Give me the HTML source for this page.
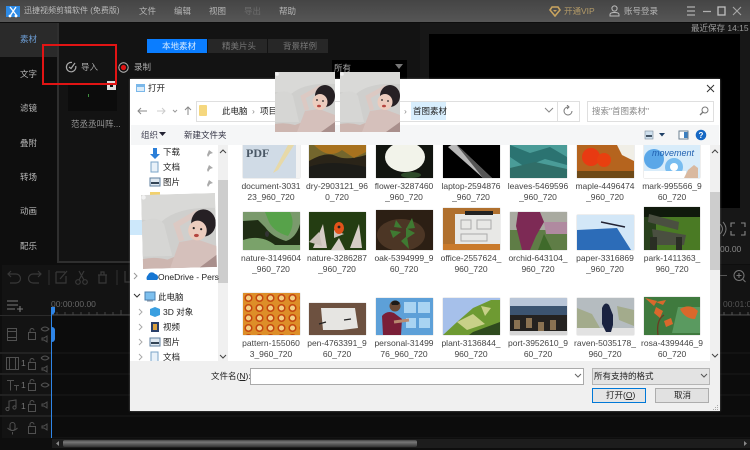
<!DOCTYPE html>
<html lang="zh"><head><meta charset="utf-8"><title>迅捷视频剪辑软件</title>
<style>
html,body{margin:0;padding:0;background:#0d0d0d}
#p{position:relative;width:750px;height:450px;overflow:hidden;background:#0e0e0e;font-family:"Liberation Sans","Noto Sans CJK SC",sans-serif;font-size:8.5px;filter:blur(.35px)}
#p div,#p svg,#p span.t{position:absolute}
.t{line-height:12px;white-space:nowrap;display:block}
.m{color:#b5b5b5}
.s{color:#b8b8b8;left:20px}
.d{color:#333}
.c{color:#444;width:66px;text-align:center;line-height:10.5px;white-space:normal;word-break:break-all}
.th{box-shadow:0 0 1px #aaa}
.n{color:#222}
</style></head><body><div id="p">

<svg width="0" height="0" style="left:0;top:0"><symbol id="baby" viewBox="0 0 60 60"><rect width="60" height="60" fill="#cfcfcd"/><path d="M0 0h60v12q-30-2-44 10L0 20z" fill="#d9d9d7"/><path d="M0 22q12-6 18 2l6 26H0z" fill="#d6d6d4"/><path d="M0 52q10-2 20 1l8-3 10 10H0z" fill="#cdb6b0"/><path d="M22 60l8-21 14-2 16 6v17z" fill="#d5c0bb"/><path d="M46 60l14-10v10z" fill="#a98f8c"/><path d="M32 38L28 25l18-10" fill="none" stroke="#dcc9c3" stroke-width="4.500"/><ellipse cx="50" cy="24" rx="10" ry="11" fill="#262024"/><ellipse cx="45" cy="30" rx="7.500" ry="8" fill="#ecccbe"/><circle cx="42" cy="28" r=".9" fill="#222"/><circle cx="48" cy="29" r=".9" fill="#222"/><ellipse cx="44" cy="34" rx="2" ry="1.300" fill="#b5453f"/><circle cx="2" cy="2" r="1.800" fill="#f2f2f2"/></symbol></svg>

<!-- title bar -->
<div style="left:0;top:0;width:750px;height:22px;background:linear-gradient(#454545,#565656)"></div>
<svg style="left:5px;top:5px" width="16" height="13" viewBox="0 0 16 13"><rect x="1" y="1" width="14" height="11" fill="#2e8be6"/><path d="M5 2l7 9M11 2L5 11" stroke="#fff" stroke-width="1.300"/><circle cx="5" cy="11" r="1.400" fill="#fff"/><circle cx="11" cy="11" r="1.400" fill="#fff"/></svg>
<span class="t m" style="left:24px;top:5px;color:#bbb;font-size:8px">迅捷视频剪辑软件 (免费版)</span>
<span class="t m" style="left:139px;top:5px">文件</span>
<span class="t m" style="left:174px;top:5px">编辑</span>
<span class="t m" style="left:209px;top:5px">视图</span>
<span class="t" style="left:244px;top:5px;color:#6c6c6c">导出</span>
<span class="t m" style="left:279px;top:5px">帮助</span>
<svg style="left:549px;top:6px" width="12" height="11" viewBox="0 0 12 11"><path d="M3 1h6l2 3-5 6-5-6z" fill="none" stroke="#c9a45f" stroke-width="1.600"/><path d="M4 4h4L6 6z" fill="#c9a45f"/></svg>
<span class="t" style="left:564px;top:5px;color:#b39a68">开通VIP</span>
<svg style="left:609px;top:5px" width="11" height="12" viewBox="0 0 11 12"><circle cx="5.500" cy="3.500" r="2.600" fill="none" stroke="#bbb"/><path d="M1 11V9.500q0-2 4.500-2t4.500 2V11z" fill="none" stroke="#bbb"/></svg>
<span class="t m" style="left:624px;top:5px">账号登录</span>
<svg style="left:686px;top:5px" width="60" height="12" viewBox="0 0 60 12"><path d="M1 2h8M1 6h8M1 10h8M17 6.500h8" stroke="#b0b0b0" stroke-width="1.200"/><rect x="32" y="2" width="7" height="8" fill="none" stroke="#c0c0c0" stroke-width="1.300"/><path d="M47 2l8 8M55 2l-8 8" stroke="#a8a8a8" stroke-width="1.100"/></svg>

<!-- sidebar -->
<div style="left:0;top:23px;width:57px;height:34px;background:#2a2a2a"></div>
<span class="t" style="left:20px;top:33px;color:#6d9ed6">素材</span>
<span class="t s" style="top:68px">文字</span>
<span class="t s" style="top:102px">滤镜</span>
<span class="t s" style="top:137px">叠附</span>
<span class="t s" style="top:171px">转场</span>
<span class="t s" style="top:205px">动画</span>
<span class="t s" style="top:240px">配乐</span>

<!-- material panel -->
<div style="left:57px;top:23px;width:361px;height:238px;background:#131313;border:solid #2f2f2f;border-width:0 1px 2px 2px"></div>
<div style="left:147px;top:39px;width:60px;height:14px;background:#0a7dff"></div>
<div style="left:208px;top:39px;width:59px;height:14px;background:#272727"></div>
<div style="left:268px;top:39px;width:60px;height:14px;background:#272727"></div>
<span class="t" style="left:162px;top:40px;color:#d8ecff">本地素材</span>
<span class="t" style="left:222px;top:40px;color:#777">精美片头</span>
<span class="t" style="left:283px;top:40px;color:#777">背景样例</span>
<svg style="left:64px;top:60px" width="14" height="14" viewBox="0 0 14 14"><path d="M8 2.500A4.700 4.700 0 1 0 11.700 6" fill="none" stroke="#aaa" stroke-width="1.200"/><path d="M5 7l2 1.500L11 3" fill="none" stroke="#aaa" stroke-width="1.200"/></svg>
<span class="t" style="left:81px;top:61px;color:#aaa">导入</span>
<svg style="left:118px;top:62px" width="11" height="11" viewBox="0 0 11 11"><circle cx="5.500" cy="5.500" r="4.700" fill="none" stroke="#bbb"/><circle cx="5.500" cy="5.500" r="2.600" fill="#e01414"/></svg>
<span class="t" style="left:134px;top:61px;color:#aaa">录制</span>
<div style="left:332px;top:60px;width:75px;height:20px;background:#000"></div>
<span class="t" style="left:334px;top:62px;color:#aaa">所有</span>
<svg style="left:395px;top:64px" width="8" height="6" viewBox="0 0 8 6"><path d="M0 0h8L4 5z" fill="#777"/></svg>
<div style="left:68px;top:83px;width:49px;height:28px;background:#0c0c0c"></div>
<div style="left:88px;top:94px;width:1px;height:3px;background:#3e8f3e"></div>
<div style="left:107px;top:81px;width:9px;height:9px;background:#ddd"></div>
<div style="left:110px;top:84px;width:3px;height:3px;background:#111"></div>
<span class="t" style="left:71px;top:118px;color:#999">范丞丞叫阵...</span>
<div style="left:42px;top:44px;width:71px;height:37px;border:2px solid #e11414"></div>

<!-- preview -->
<div style="left:420px;top:23px;width:330px;height:241px;background:#171717"></div>
<div style="left:429px;top:34px;width:311px;height:174px;background:#000"></div>
<span class="t" style="left:691px;top:22px;color:#999">最近保存 14:15</span>
<svg style="left:718px;top:221px" width="30" height="16" viewBox="0 0 30 16"><path d="M2 3q5 5 0 10M5 1q6 7 0 14" fill="none" stroke="#777"/><path d="M13 6V2h4M23 2h4v4M27 10v4h-4M17 14h-4v-4" fill="none" stroke="#888" stroke-width="1.100"/></svg>
<span class="t" style="left:720px;top:243px;color:#888">00.00</span>

<!-- timeline -->
<div style="left:2px;top:265px;width:748px;height:173px;background:#131313"></div>
<svg style="left:0;top:265px" width="130" height="24" viewBox="0 0 130 24" fill="none" stroke="#383838" stroke-width="1.200"><path d="M11 6L8 9l3 3M8 9h8a4 4 0 0 1 0 9h-6M38 6l3 3-3 3M41 9h-8a4 4 0 0 0 0 9h6"/><path d="M49 5v15" stroke="#2c2c2c"/><path d="M56 7h9M56 7v11h10v-7M60 14l7-8"/><circle cx="78" cy="17" r="2.300"/><circle cx="85" cy="17" r="2.300"/><path d="M79 15l5-9M84 15l-5-9"/><path d="M98 10h9M99 10v8h7v-8M101 10V7h3v3"/><path d="M117 5v15" stroke="#2c2c2c"/><path d="M125 6v11h5"/></svg>
<svg style="left:718px;top:268px" width="32" height="18" viewBox="0 0 32 18" fill="none" stroke="#777"><path d="M2 7.500h7" stroke="#555"/><circle cx="21" cy="7.500" r="5"/><path d="M18.500 7.500h5M21 5v5M25 11.500l2.500 2.500"/></svg>
<svg style="left:7px;top:300px" width="16" height="12" viewBox="0 0 16 12"><path d="M0 1h11M0 5h11M0 9h8M10 9h6M13 6v6" stroke="#777" stroke-width="1.100"/></svg>
<span class="t" style="left:51px;top:298px;color:#666">00:00:00.00</span>
<span class="t" style="left:723px;top:298px;color:#555">00:01:04</span>
<svg style="left:52px;top:310px" width="698" height="5" viewBox="0 0 698 5"><path d="M0 4.500h698" stroke="#333"/><path d="M5 2v3M13 2v3M21 2v3M29 2v3M37 2v3M45 2v3M53 2v3M61 2v3M69 0v5" stroke="#444"/><path d="M672 2v3M680 2v3M688 2v3M696 2v3" stroke="#555"/></svg>
<div style="left:0;top:315px;width:750px;height:1px;background:#2b2b2b"></div>
<div style="left:52px;top:316px;width:698px;height:36px;background:#0c0c0c"></div>
<div style="left:52px;top:354px;width:698px;height:19px;background:#0c0c0c"></div>
<div style="left:52px;top:375px;width:698px;height:19px;background:#0c0c0c"></div>
<div style="left:52px;top:396px;width:698px;height:19px;background:#0c0c0c"></div>
<div style="left:52px;top:417px;width:698px;height:20px;background:#0c0c0c"></div>
<div style="left:0;top:352px;width:52px;height:2px;background:#222"></div>
<div style="left:0;top:373px;width:52px;height:2px;background:#222"></div>
<div style="left:0;top:394px;width:52px;height:2px;background:#222"></div>
<div style="left:0;top:415px;width:52px;height:2px;background:#222"></div>
<svg style="left:0;top:316px" width="52" height="122" viewBox="0 0 52 122" fill="none" stroke="#505050">
<rect x="7.500" y="12.500" width="9" height="12"/><path d="M7.500 15.500h9M7.500 21.500h9"/>
<rect x="6.500" y="41.500" width="12" height="12"/><path d="M9.500 41.500v12M15.500 41.500v12"/>
<path d="M7 64.500h7M10.500 64.500v10M14 69.500h5M16.500 69.500v5"/>
<path d="M9 93V85l7-1v7"/><circle cx="7.500" cy="93" r="1.600"/><circle cx="14.500" cy="91.500" r="1.600"/>
<rect x="10" y="106.500" width="5" height="8" rx="2.500"/><path d="M7.500 112q5 5 10 0M12.500 116v2.500"/>
<path d="M28.500 16.500h7v7h-7zM30 16.500v-2a2 2 0 0 1 4 0M28.500 46.500h7v7h-7zM30 46.500v-2a2 2 0 0 1 4 0M28.500 67.500h7v7h-7zM30 67.500v-2a2 2 0 0 1 4 0M28.500 88.500h7v7h-7zM30 88.500v-2a2 2 0 0 1 4 0M28.500 110.500h7v7h-7zM30 110.500v-2a2 2 0 0 1 4 0"/>
<path d="M41 13q4-4 8 0q-4 4-8 0M41 42q4-4 8 0q-4 4-8 0M41 69q4-4 8 0q-4 4-8 0"/>
<path d="M42 22h2l3-2v6l-3-2h-2zM42 52h2l3-2v6l-3-2h-2zM42 88h2l3-2v6l-3-2h-2zM42 110h2l3-2v6l-3-2h-2z"/></svg>
<span class="t" style="left:21px;top:357px;color:#777">1</span>
<span class="t" style="left:21px;top:379px;color:#777">1</span>
<span class="t" style="left:21px;top:400px;color:#777">1</span>
<div style="left:51px;top:309px;width:1px;height:129px;background:#2f86e8"></div>
<svg style="left:51px;top:307px" width="5" height="8" viewBox="0 0 5 8"><path d="M0 0h4v5L2 8 0 6z" fill="#2f86e8"/></svg>
<div style="left:52px;top:327px;width:3px;height:15px;background:#2f86e8;border-radius:0 3px 3px 0"></div>
<div style="left:52px;top:439px;width:698px;height:9px;background:#1d1d1d"></div>
<div style="left:63px;top:440px;width:354px;height:7px;background:linear-gradient(#444,#777 30%,#333);border-radius:2px"></div>
<svg style="left:54px;top:440px" width="696" height="7" viewBox="0 0 696 7"><path d="M5 1L2 3.500 5 6zM690 1l3 2.500L690 6z" fill="#888"/></svg>

<!-- dialog -->
<div style="left:130px;top:79px;width:590px;height:332px;background:#fff;box-shadow:0 0 2px #666"></div>
<svg style="left:136px;top:84px" width="10" height="8" viewBox="0 0 10 8"><rect width="9" height="8" fill="#7bb8ea"/><rect x="1" y="3" width="7" height="4" fill="#dcecf8"/></svg>
<span class="t n" style="left:148px;top:82px">打开</span>
<svg style="left:706px;top:84px" width="9" height="9" viewBox="0 0 9 9"><path d="M1 1l7 7M8 1L1 8" stroke="#333"/></svg>
<svg style="left:135px;top:105px" width="60" height="12" viewBox="0 0 60 12" fill="none"><path d="M12 6H3M6 3L3 6l3 3" stroke="#888"/><path d="M22 6h8M27 3l3 3-3 3" stroke="#ccc"/><path d="M38 5l2 2 2-2" stroke="#999"/><path d="M53 10V2M50 5l3-3 3 3" stroke="#888"/></svg>
<div style="left:196px;top:101px;width:382px;height:19px;border:1px solid #dfdfdf"></div>
<div style="left:557px;top:101px;width:1px;height:20px;background:#dfdfdf"></div>
<div style="left:587px;top:101px;width:125px;height:19px;border:1px solid #dfdfdf"></div>
<div style="left:199px;top:105px;width:8px;height:11px;background:#f5d77e;border-radius:1px"></div>
<span class="t" style="left:252px;top:105px;color:#888">›</span>
<span class="t n" style="left:222px;top:105px">此电脑</span>
<span class="t n" style="left:260px;top:105px">项目</span>
<div style="left:411px;top:102px;width:35px;height:18px;background:#d8eefd"></div>
<span class="t n" style="left:413px;top:105px">首图素材</span>
<span class="t" style="left:404px;top:105px;color:#888">›</span>
<svg style="left:544px;top:107px" width="10" height="7" viewBox="0 0 10 7"><path d="M1 1l4 4 4-4" stroke="#888" fill="none"/></svg>
<svg style="left:563px;top:105px" width="10" height="11" viewBox="0 0 10 11"><path d="M5 2a4 4 0 1 0 4 4M4 0l2 2-2 2" fill="none" stroke="#777"/></svg>
<span class="t" style="left:592px;top:105px;color:#888">搜索"首图素材"</span>
<svg style="left:699px;top:106px" width="10" height="10" viewBox="0 0 10 10"><circle cx="6" cy="4" r="3" fill="none" stroke="#777"/><path d="M4 6L1 9" stroke="#777" stroke-width="1.300"/></svg>
<div style="left:131px;top:125px;width:588px;height:20px;background:#f5f6f7"></div>
<span class="t" style="left:141px;top:129px;color:#445">组织</span>
<svg style="left:159px;top:132px" width="7" height="4" viewBox="0 0 7 4"><path d="M0 0h7L3.500 4z" fill="#223"/></svg>
<span class="t" style="left:184px;top:129px;color:#334">新建文件夹</span>
<svg style="left:644px;top:128px" width="70" height="14" viewBox="0 0 70 14"><rect x="1" y="3" width="8" height="8" fill="#cfe0ee" stroke="#7a8a9a" stroke-width=".6"/><rect x="2" y="7" width="6" height="2" fill="#456"/><path d="M15 5h6l-3 3.500z" fill="#1f3f66"/><rect x="35" y="3" width="9" height="8" fill="#fff" stroke="#6c8092"/><rect x="40" y="4" width="3.500" height="6" fill="#3c7fc0"/><circle cx="57" cy="7" r="5.300" fill="#1668c4"/><text x="57" y="10" font-size="8" font-weight="bold" font-family="Liberation Sans" fill="#fff" text-anchor="middle">?</text></svg>

<!-- nav pane -->
<svg style="left:130px;top:145px" width="100" height="217" viewBox="0 0 100 217">
<path d="M23 3v6h-3l5 5 5-5h-3V3z" fill="#2c7fd8"/>
<rect x="21" y="17" width="7" height="10" fill="#e8f1f9" stroke="#7aa4c8"/>
<rect x="20" y="33" width="10" height="8" fill="#dfe8f0" stroke="#5f7f9f"/><rect x="21" y="37" width="8" height="2" fill="#345"/>
<rect x="20" y="47" width="10" height="5" fill="#f2d16e"/>
<path d="M79 5l4 3-3 1-2 3-1-2zM79 20l4 3-3 1-2 3-1-2zM79 35l4 3-3 1-2 3-1-2z" fill="#aaa"/>
<rect x="0" y="75" width="12" height="15" fill="#cde8fb"/>
<path d="M4 128l3 3-3 3" fill="none" stroke="#999"/>
<path d="M17 135a4 4 0 0 1 1-5 4 4 0 0 1 7-1 3.500 3.500 0 0 1 2 6z" fill="#1676d2"/>
<path d="M4 149l3 3 3-3" fill="none" stroke="#333"/>
<rect x="15" y="147" width="10" height="8" fill="#7ec0ee" stroke="#4a80b0"/><rect x="17" y="155" width="6" height="1.500" fill="#7a90a8"/>
<path d="M9 164l3 3-3 3M9 179l3 3-3 3M9 194l3 3-3 3M9 209l3 3-3 3" fill="none" stroke="#aaa"/>
<path d="M20 164l5-2 5 2v6l-5 2-5-2z" fill="#3a9fe0"/>
<rect x="21" y="177" width="8" height="10" fill="#2a3f6a"/><rect x="23" y="179" width="4" height="6" fill="#d8a040"/>
<rect x="20" y="193" width="10" height="8" fill="#dfe8f0" stroke="#5f7f9f"/><rect x="21" y="197" width="8" height="2" fill="#345"/>
<rect x="21" y="207" width="7" height="10" fill="#e8f1f9" stroke="#7aa4c8"/>
<rect x="88" y="0" width="10" height="216" fill="#f0f0f0"/><rect x="88" y="35" width="10" height="103" fill="#cdcdcd"/>
<path d="M90 8l3-3 3 3M90 210l3 3 3-3" fill="none" stroke="#444"/>
</svg>
<span class="t n" style="left:163px;top:146px">下载</span>
<span class="t n" style="left:163px;top:161px">文档</span>
<span class="t n" style="left:163px;top:176px">图片</span>
<span class="t n" style="left:158px;top:271px">OneDrive - Pers</span>
<span class="t n" style="left:158px;top:291px">此电脑</span>
<span class="t n" style="left:163px;top:306px">3D 对象</span>
<span class="t n" style="left:163px;top:321px">视频</span>
<span class="t n" style="left:163px;top:336px">图片</span>
<span class="t n" style="left:163px;top:351px">文档</span>

<!-- file grid -->
<div style="left:0;top:0;width:750px;height:450px;clip-path:inset(145px 40px 89px 230px)">
<svg class="th" style="left:243px;top:135px" width="57" height="43" viewBox="0 0 57 43"><rect width="57" height="43" fill="#d0dbe6"/><rect x="53" width="4" height="43" fill="#f2f2f2"/><text x="3" y="22" font-family="Liberation Serif" font-weight="bold" font-size="12" fill="#4a5866">PDF</text><path d="M46 8L30 38l5-3L51 10z" fill="#e7d9a8"/></svg>
<svg class="th" style="left:309px;top:135px" width="57" height="43" viewBox="0 0 57 43"><rect width="57" height="43" fill="#2a2418"/><path d="M0 10h57v10q-20 6-30 1T0 26z" fill="#73662d"/><path d="M5 10q15 15 28 5l12 8 12-6V8H5z" fill="#a8721e"/><path d="M0 32q20-8 57 0v11H0z" fill="#1c1c18"/></svg>
<svg class="th" style="left:376px;top:135px" width="57" height="43" viewBox="0 0 57 43"><rect width="57" height="43" fill="#121510"/><ellipse cx="29" cy="22" rx="20" ry="15" fill="#f2f3ea"/><ellipse cx="35" cy="40" rx="10" ry="3" fill="#2e4a2a"/></svg>
<svg class="th" style="left:443px;top:135px" width="57" height="43" viewBox="0 0 57 43"><rect width="57" height="43" fill="#000"/><path d="M5 12L40 43h9L12 8z" fill="#b8b8b8"/><path d="M12 8L49 43H40L20 18z" fill="#555"/></svg>
<svg class="th" style="left:510px;top:135px" width="57" height="43" viewBox="0 0 57 43"><rect width="57" height="43" fill="#4a9c98"/><path d="M0 10l20 8 20-6 17 10v8L35 24 15 32 0 22z" fill="#2b7371"/><path d="M0 33l25-6 32 7v9H0z" fill="#306e68"/></svg>
<svg class="th" style="left:577px;top:135px" width="57" height="43" viewBox="0 0 57 43"><rect width="57" height="43" fill="#b5641e"/><circle cx="14" cy="22" r="9" fill="#e83a12"/><circle cx="27" cy="25" r="7" fill="#e8400f"/><path d="M40 10h17v16L45 20z" fill="#f0eee6"/><path d="M0 36h57v7H0z" fill="#6e4a18"/></svg>
<svg class="th" style="left:644px;top:135px" width="56" height="43" viewBox="0 0 56 43"><rect width="56" height="43" fill="#d8ecfa"/><circle cx="10" cy="24" r="10" fill="#5aa7e8"/><circle cx="30" cy="32" r="9" fill="#79bdf0"/><circle cx="30" cy="32" r="4" fill="#fff"/><path d="M0 36h42v7H0z" fill="#fff"/><path d="M44 35l6-5 4 3v10H40z" fill="#d9b9a0"/><text x="8" y="21" font-family="Liberation Sans" font-style="italic" font-size="9" fill="#2060b0">movement</text></svg>

<svg class="th" style="left:243px;top:212px" width="57" height="38" viewBox="0 0 57 38"><rect width="57" height="38" fill="#1f2d14"/><path d="M0 0h57v12q-4 14-14 17-14-4-21-14L15 8 0 9z" fill="#7a9a6c"/><path d="M22 0h25q6 12-2 24-14-4-19-14z" fill="#57a24a"/><path d="M0 28q18-6 32 5l25 0v5H0z" fill="#7aa26a"/><ellipse cx="24" cy="22" rx="2" ry="3" fill="#333"/></svg>
<svg class="th" style="left:309px;top:212px" width="57" height="38" viewBox="0 0 57 38"><rect width="57" height="38" fill="#243d12"/><path d="M4 36l10-24 4 24zM22 38l8-12 6 12zM41 36l9-24 3 24z" fill="#d6cdc6"/><path d="M0 30l10-10 3 14zM25 18l10 4-10 4z" fill="#c9c0b8"/><ellipse cx="30" cy="16" rx="5" ry="6" fill="#e2531a"/><circle cx="30" cy="15" r="1.400" fill="#222"/></svg>
<svg class="th" style="left:376px;top:210px" width="57" height="40" viewBox="0 0 57 40"><rect width="57" height="40" fill="#2c1f14"/><ellipse cx="25" cy="25" rx="24" ry="16" fill="#4c3625"/><path d="M20 10l6 8-8-1zM36 8l3 10-9 1zM30 18l9 5-9 6zM31 26l2 13-8-8zM14 20l11 2-8 6z" fill="#3f7a32"/></svg>
<svg class="th" style="left:443px;top:208px" width="57" height="42" viewBox="0 0 57 42"><rect width="57" height="42" fill="#b0702e"/><rect x="12" y="6" width="45" height="30" fill="#e8e8e6"/><path d="M22 3h28v4H22z" fill="#222"/><path d="M18 12h10v9H18zM34 12h14v9H34zM18 26h26v7H18z" fill="none" stroke="#aaa"/><path d="M0 36h57v6H0z" fill="#c97a2c"/></svg>
<svg class="th" style="left:510px;top:212px" width="57" height="38" viewBox="0 0 57 38"><rect width="57" height="38" fill="#a9aaa0"/><path d="M0 18h57v20H0z" fill="#5f7d46"/><path d="M8 0h22l4 10-8 14-6 14H12L6 14z" fill="#7d2a55"/><path d="M34 10h23v12H36z" fill="#b08aa0"/><path d="M34 22l8 16H28z" fill="#3f6a2a"/></svg>
<svg class="th" style="left:577px;top:215px" width="57" height="35" viewBox="0 0 57 35"><rect width="57" height="35" fill="#d3e7f7"/><path d="M0 15l40-2 14 22H0z" fill="#2c6cb8"/><path d="M24 7l24 5" stroke="#223" stroke-width="1.500"/></svg>
<svg class="th" style="left:644px;top:207px" width="56" height="43" viewBox="0 0 56 43"><rect width="56" height="43" fill="#4a7a24"/><path d="M0 0h56v10H0z" fill="#101a0c"/><path d="M0 10h12v33H0z" fill="#28401c"/><path d="M5 7l30 8-1 8L4 15zM8 22l34 6-2 10H10z" fill="#4a4f40"/><path d="M6 30h7v13H6zM32 30h6v13h-6z" fill="#2a2e24"/></svg>

<svg class="th" style="left:243px;top:293px" width="57" height="42" viewBox="0 0 57 42"><defs><pattern id="pa" width="11" height="10" patternUnits="userSpaceOnUse"><rect width="11" height="10" fill="#dd8e28"/><circle cx="5.500" cy="5" r="3.300" fill="#f3cf85" stroke="#c4460f" stroke-width="1.500"/></pattern></defs><rect width="57" height="42" fill="url(#pa)"/></svg>
<svg class="th" style="left:309px;top:303px" width="57" height="32" viewBox="0 0 57 32"><rect width="57" height="32" fill="#6d5140"/><path d="M12 5h19l2 22H14zM31 5h15l3 20-16 2z" fill="#e6e5e2"/><path d="M10 21l7-2M35 17l7-1" stroke="#222" stroke-width="1.300"/></svg>
<svg class="th" style="left:376px;top:298px" width="57" height="37" viewBox="0 0 57 37"><rect width="57" height="37" fill="#5da0d8"/><path d="M28 4h12v11H28zM42 4h12v11H42zM30 20h10v10H30zM43 20h11v10H43z" fill="#a9d4f2"/><path d="M6 18q5-6 12-3l8 6-1 16H7z" fill="#7a1f38"/><circle cx="19" cy="8" r="5.500" fill="#6a4a36"/><path d="M15 5q4-5 9 0l-2 2h-6z" fill="#1d1a18"/><path d="M18 24l15-2" stroke="#b98a70" stroke-width="3"/></svg>
<svg class="th" style="left:443px;top:298px" width="57" height="37" viewBox="0 0 57 37"><rect width="57" height="37" fill="#a6c0ea"/><path d="M0 37L14 24 30 10 48 2h9v35z" fill="#6e9a32"/><path d="M14 24l16-8 12 10-18 6zM38 8l10 2-6 8z" fill="#c8d088"/><path d="M30 34l27-10v13H26z" fill="#2e4a1e"/></svg>
<svg class="th" style="left:510px;top:298px" width="57" height="37" viewBox="0 0 57 37"><rect width="57" height="37" fill="#b9c6d8"/><path d="M0 8h57v9H0z" fill="#3c5470"/><path d="M0 17h57v20H0z" fill="#242220"/><path d="M4 22h6v9H4zM16 20h6v10h-6zM28 24h6v9h-6zM40 22h6v10h-6z" fill="#8a7252"/><path d="M0 33h57v4H0z" fill="#d5d5d5"/></svg>
<svg class="th" style="left:577px;top:298px" width="57" height="37" viewBox="0 0 57 37"><rect width="57" height="37" fill="#b5bcc0"/><path d="M0 10l15 6 8 14H0zM40 8l17 4v16l-15-6z" fill="#a3ab8c"/><path d="M0 30h57v7H0z" fill="#e2e2e2"/><path d="M25 10q3-7 7-3l4 10 0 10-2 7h-5l-4-8z" fill="#1a2340"/></svg>
<svg class="th" style="left:644px;top:297px" width="56" height="38" viewBox="0 0 56 38"><rect width="56" height="38" fill="#3f7a3e"/><path d="M34 10h22v26H28z" fill="#5a9a60"/><path d="M36 12q10-6 18 2l-3 8q-10 0-15-10zM1 1l12 3-3 5zM12 5l10-2-3 5zM12 10l7 4-3 7-6-5zM20 24l7-3 2 6-7 3z" fill="#d9682c"/><path d="M14 38q-2-15 6-20" stroke="#6a3a22" fill="none" stroke-width="1.300"/></svg>

<div class="c t" style="left:238px;top:181px">document-3031<br>23_960_720</div>
<div class="c t" style="left:304px;top:181px">dry-2903121_96<br>0_720</div>
<div class="c t" style="left:371px;top:181px">flower-3287460<br>_960_720</div>
<div class="c t" style="left:438px;top:181px">laptop-2594876<br>_960_720</div>
<div class="c t" style="left:505px;top:181px">leaves-5469596<br>_960_720</div>
<div class="c t" style="left:572px;top:181px">maple-4496474<br>_960_720</div>
<div class="c t" style="left:639px;top:181px">mark-995566_9<br>60_720</div>
<div class="c t" style="left:238px;top:253px">nature-3149604<br>_960_720</div>
<div class="c t" style="left:304px;top:253px">nature-3286287<br>_960_720</div>
<div class="c t" style="left:371px;top:253px">oak-5394999_9<br>60_720</div>
<div class="c t" style="left:438px;top:253px">office-2557624_<br>960_720</div>
<div class="c t" style="left:505px;top:253px">orchid-643104_<br>960_720</div>
<div class="c t" style="left:572px;top:253px">paper-3316869<br>_960_720</div>
<div class="c t" style="left:639px;top:253px">park-1411363_<br>960_720</div>
<div class="c t" style="left:238px;top:338px">pattern-155060<br>3_960_720</div>
<div class="c t" style="left:304px;top:338px">pen-4763391_9<br>60_720</div>
<div class="c t" style="left:371px;top:338px">personal-31499<br>76_960_720</div>
<div class="c t" style="left:438px;top:338px">plant-3136844_<br>960_720</div>
<div class="c t" style="left:505px;top:338px">port-3952610_9<br>60_720</div>
<div class="c t" style="left:572px;top:338px">raven-5035178_<br>960_720</div>
<div class="c t" style="left:639px;top:338px">rosa-4399446_9<br>60_720</div>
</div>

<!-- main scrollbar -->
<div style="left:710px;top:145px;width:10px;height:216px;background:#f0f0f0"></div>
<div style="left:710px;top:192px;width:10px;height:78px;background:#cdcdcd"></div>
<svg style="left:710px;top:145px" width="10" height="216" viewBox="0 0 10 216"><path d="M2 8l3-3 3 3M2 209l3 3 3-3" fill="none" stroke="#444"/></svg>

<!-- footer -->
<div style="left:130px;top:361px;width:590px;height:50px;background:#f0f0f0"></div>
<span class="t n" style="left:211px;top:370px">文件名(<u>N</u>):</span>
<div style="left:250px;top:368px;width:332px;height:15px;background:#fff;border:1px solid #aaa"></div>
<svg style="left:574px;top:373px" width="8" height="5" viewBox="0 0 8 5"><path d="M1 1l3 3 3-3" fill="none" stroke="#666"/></svg>
<div style="left:592px;top:368px;width:116px;height:15px;background:#e3e3e3;border:1px solid #b5b5b5"></div>
<span class="t n" style="left:594px;top:370px">所有支持的格式</span>
<svg style="left:700px;top:373px" width="8" height="5" viewBox="0 0 8 5"><path d="M1 1l3 3 3-3" fill="none" stroke="#555"/></svg>
<div style="left:592px;top:388px;width:52px;height:13px;background:#e5e5e5;border:1px solid #0078d7"></div>
<span class="t n" style="left:606px;top:389px">打开(<u>O</u>)</span>
<div style="left:655px;top:388px;width:52px;height:13px;background:#e1e1e1;border:1px solid #adadad"></div>
<span class="t n" style="left:674px;top:389px">取消</span>
<svg style="left:713px;top:404px" width="6" height="6" viewBox="0 0 6 6"><path d="M4 1h1v1H4zM2 3h1v1H2zM4 3h1v1H4zM0 5h1v1H0zM2 5h1v1H2zM4 5h1v1H4z" fill="#aaa"/></svg>

<!-- dragged photos -->
<svg style="left:275px;top:72px" width="60" height="60" viewBox="0 0 60 60"><use href="#baby" width="60" height="60"/></svg>
<svg style="left:340px;top:72px" width="60" height="60" viewBox="0 0 60 60"><use href="#baby" width="60" height="60"/></svg>
<svg style="left:142px;top:194px;transform:rotate(-1.500deg)" width="74" height="74" viewBox="0 0 60 60"><use href="#baby" width="60" height="60"/></svg>
</div></body></html>
